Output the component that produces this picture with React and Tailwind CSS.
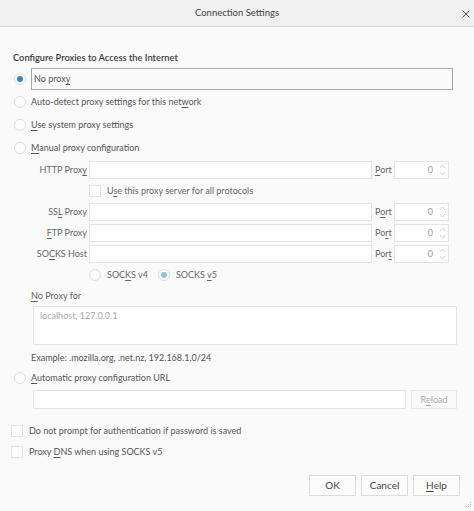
import React from "react";

const K = ({ children }) => <span className="underline underline-offset-2">{children}</span>;

const Radio = ({ checked, light }) => (
  <span className="w-[12px] h-[12px] rounded-full border border-[#dcdcdc] bg-white flex items-center justify-center shrink-0">
    {checked && (
      <span className={`w-[6px] h-[6px] rounded-full ${light ? "bg-[#8fc2e0]" : "bg-[#2f86c8]"}`} />
    )}
  </span>
);

const Check = () => (
  <span className="w-[12px] h-[12px] border border-[#e2e2e2] bg-white shrink-0" />
);

const Spinner = () => (
  <svg width="7" height="14" viewBox="0 0 7 14" className="shrink-0">
    <path d="M1 5 L3.5 2 L6 5" fill="none" stroke="#d6d6d6" strokeWidth="1" />
    <path d="M1 9 L3.5 12 L6 9" fill="none" stroke="#d6d6d6" strokeWidth="1" />
  </svg>
);

const ProxyRow = ({ label, port }) => (
  <div className="h-[21px] flex items-center">
    <div className="w-[76px] text-right pr-[2px] text-[#666]">{label}</div>
    <div className="w-[283px] h-[18px] border border-[#e4e4e4] bg-white" />
    <div className="w-[22px] pl-[3px] text-[#666]">{port}</div>
    <div className="w-[55px] h-[18px] border border-[#e4e4e4] bg-white flex items-center justify-end pr-[2px] gap-[6px] text-[#999]">
      <span>0</span>
      <Spinner />
    </div>
  </div>
);

export default function App() {
  return (
    <div
      className="w-[474px] h-[511px] bg-[#fafafa] flex flex-col text-[9px] text-[#555] relative"
      style={{ fontFamily: 'Lato, "Open Sans", sans-serif' }}
    >
      <div className="h-[27px] bg-[#f0f0f0] border-b border-[#dadada] flex items-center justify-center relative shrink-0">
        <span className="text-[9.5px] text-[#444]">Connection Settings</span>
        <svg width="8" height="8" viewBox="0 0 8 8" className="absolute right-[4px] top-[10px]">
          <path d="M0.5 0.5 L7.5 7.5 M7.5 0.5 L0.5 7.5" stroke="#555" strokeWidth="1" />
        </svg>
      </div>

      <div className="pl-[11px] pr-[14px] pt-[23px] flex flex-col">
        <div className="h-[16px] pl-[2px] flex items-center text-[9.3px] font-semibold text-[#3a3a3a]">
          Configure Proxies to Access the Internet
        </div>

        <div className="mt-[2px] h-[22px] pl-[3px] flex items-center">
          <Radio checked />
          <div className="ml-[5px] w-[422px] h-[22px] border border-[#a8a8a8] flex items-center pl-[2px]">
            No prox<K>y</K>
          </div>
        </div>
        <div className="h-[23px] pl-[3px] flex items-center gap-[5px]">
          <Radio />
          <span>Auto-detect proxy settings for this net<K>w</K>ork</span>
        </div>
        <div className="h-[23px] pl-[3px] flex items-center gap-[5px]">
          <Radio />
          <span><K>U</K>se system proxy settings</span>
        </div>
        <div className="h-[23px] pl-[3px] flex items-center gap-[5px]">
          <Radio />
          <span><K>M</K>anual proxy configuration</span>
        </div>

        <div className="pl-[2px] flex flex-col">
          <ProxyRow label={<>HTTP Prox<K>y</K></>} port={<><K>P</K>ort</>} />
          <div className="h-[21px] pl-[76px] flex items-center gap-[6px] text-[#666]">
            <Check />
            <span>U<K>s</K>e this proxy server for all protocols</span>
          </div>
          <ProxyRow label={<>SS<K>L</K> Proxy</>} port={<>P<K>o</K>rt</>} />
          <ProxyRow label={<><K>F</K>TP Proxy</>} port={<>Po<K>r</K>t</>} />
          <ProxyRow label={<>SO<K>C</K>KS Host</>} port={<>Por<K>t</K></>} />
          <div className="h-[21px] pl-[76px] flex items-center gap-[6px] text-[#666]">
            <Radio />
            <span className="mr-[4px]">SOC<K>K</K>S v4</span>
            <Radio checked light />
            <span>SOCKS <K>v</K>5</span>
          </div>
        </div>

        <div className="h-[21px] pl-[20px] flex items-center text-[#666]">
          <span><K>N</K>o Proxy for</span>
        </div>
        <div className="ml-[22px] w-[424px] h-[39px] border border-[#e4e4e4] bg-white pl-[6px] pt-[2px] text-[#aaa]">
          localhost, 127.0.0.1
        </div>
        <div className="mt-[4px] h-[18px] pl-[20px] flex items-center">
          Example: .mozilla.org, .net.nz, 192.168.1.0/24
        </div>
        <div className="h-[21px] pl-[3px] flex items-center gap-[5px]">
          <Radio />
          <span><K>A</K>utomatic proxy configuration URL</span>
        </div>
        <div className="mt-[2px] ml-[22px] flex items-center gap-[5px]">
          <div className="w-[373px] h-[19px] border border-[#e4e4e4] bg-white" />
          <div className="w-[46px] h-[19px] border border-[#e8e8e8] bg-[#fafafa] flex items-center justify-center text-[#aaa]">
            R<K>e</K>load
          </div>
        </div>

        <div className="mt-[11px] h-[21px] flex items-center gap-[6px]">
          <Check />
          <span>Do not prompt for authent<K>i</K>cation if password is saved</span>
        </div>
        <div className="h-[21px] flex items-center gap-[6px]">
          <Check />
          <span>Proxy <K>D</K>NS when using SOCKS v5</span>
        </div>

        <div className="mt-[13px] flex justify-end gap-[5px]">
          <div className="w-[47px] h-[21px] border border-[#dcdcdc] bg-[#fcfcfc] flex items-center justify-center text-[10px] text-[#444]">OK</div>
          <div className="w-[47px] h-[21px] border border-[#dcdcdc] bg-[#fcfcfc] flex items-center justify-center text-[10px] text-[#444]">Cancel</div>
          <div className="w-[47px] h-[21px] border border-[#dcdcdc] bg-[#fcfcfc] flex items-center justify-center text-[10px] text-[#444]"><K>H</K>elp</div>
        </div>
      </div>

      <svg width="6" height="6" viewBox="0 0 6 6" className="absolute right-[2px] bottom-[3px]">
        <rect x="4" y="0" width="1" height="1" fill="#bbb" />
        <rect x="2" y="2" width="1" height="1" fill="#bbb" />
        <rect x="4" y="2" width="1" height="1" fill="#bbb" />
        <rect x="0" y="4" width="1" height="1" fill="#bbb" />
        <rect x="2" y="4" width="1" height="1" fill="#bbb" />
        <rect x="4" y="4" width="1" height="1" fill="#bbb" />
      </svg>
    </div>
  );
}
